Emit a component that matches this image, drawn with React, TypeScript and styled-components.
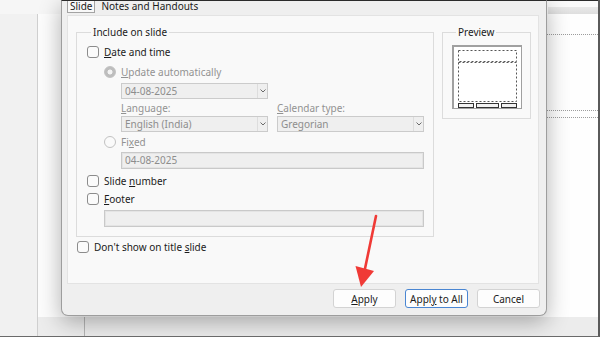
import React from "react";
import styled, { createGlobalStyle } from "styled-components";

const GlobalStyle = createGlobalStyle`
  html, body {
    margin: 0;
    padding: 0;
  }
  body {
    font-family: "Segoe UI", "Noto Sans", sans-serif;
    font-size: 10px;
    color: #1b1b1b;
  }
`;

const Page = styled.div`
  position: relative;
  width: 600px;
  height: 337px;
  overflow: hidden;
  box-sizing: border-box;
  display: flex;
  flex-direction: column;
  background: #f4f4f4;
  border-right: 2px solid #5a5a5a;
  border-bottom: 1px solid #6a6a6a;
`;

const TopBar = styled.div`
  height: 14px;
  display: flex;
  flex-shrink: 0;
`;

const TopLeft = styled.div`
  width: 61px;
  background: #f6f6f6;
`;

const TopRight = styled.div`
  flex: 1;
  display: flex;
  justify-content: flex-end;
  align-items: flex-end;
  border-top: 1px solid #2b2b2b;
  background: #fafafa;
`;

const Band = styled.div`
  width: 50px;
  height: 7px;
  background: linear-gradient(#e9e9e9, #dedede);
`;

const Body = styled.div`
  flex: 1;
  display: flex;
`;

const Sidebar = styled.div`
  width: 37px;
  background: #f1f1f1;
`;

const Workspace = styled.div`
  flex: 1;
  display: flex;
  flex-direction: column;
  border-left: 1px solid #cfcfcf;
  background: #fcfcfc;
`;

const WorkRow = styled.div`
  flex: 1;
  display: flex;
`;

const Gutter = styled.div`
  width: 23px;
`;

const Canvas = styled.div`
  flex: 1;
  display: flex;
  flex-direction: column;
  background: #fefefe;
`;

const Guide = styled.div<{ $gap: number }>`
  margin-top: ${(p) => p.$gap}px;
  border-top: 1px dotted #9c9c9c;
`;

const NotesBar = styled.div`
  height: 19px;
  display: flex;
  background: #ececec;
`;

const NotesDivider = styled.div`
  width: 46px;
  border-right: 1px solid #b5b5b5;
`;

const Dialog = styled.div`
  position: absolute;
  left: 61px;
  top: 0;
  width: 486px;
  height: 316px;
  box-sizing: border-box;
  display: flex;
  flex-direction: column;
  background: #efefef;
  border: 1px solid #9d9d9d;
  border-top: 1px solid #2b2b2b;
  border-radius: 0 0 7px 7px;
  box-shadow: 0 6px 22px rgba(0, 0, 0, 0.3);
`;

const TabStrip = styled.div`
  height: 14px;
  display: flex;
  align-items: flex-start;
  padding-left: 5px;
  gap: 3px;
  line-height: 11px;
`;

const Tab = styled.div<{ $active?: boolean }>`
  height: 12px;
  box-sizing: border-box;
  padding: 0 2px;
  border: 1px solid ${(p) => (p.$active ? "#a3a3a3" : "transparent")};
  border-top: none;
  background: ${(p) => (p.$active ? "#f8f8f8" : "transparent")};
  color: #1b1b1b;
`;

const Panel = styled.div`
  height: 269px;
  box-sizing: border-box;
  margin: 0 7px 0 5px;
  padding: 10px 7px 0 8px;
  background: #f9f9f9;
  border: 1px solid #e3e3e3;
`;

const Columns = styled.div`
  display: flex;
  align-items: flex-start;
  gap: 8px;
`;

const Group = styled.fieldset<{ $width: number }>`
  width: ${(p) => p.$width}px;
  box-sizing: border-box;
  min-width: 0;
  margin: 0;
  border: 1px solid #dcdcdc;
  display: flex;
  flex-direction: column;
`;

const MainGroup = styled(Group)`
  padding: 0 0 9px 10px;
`;

const PreviewGroup = styled(Group)`
  padding: 7px 0 9px 9px;
`;

const Legend = styled.legend`
  margin-left: 4px;
  padding: 0 2px;
  line-height: 12px;
  color: #1b1b1b;
`;

const Row = styled.div<{ $mt: number; $indent: number }>`
  display: flex;
  align-items: center;
  gap: 5px;
  height: 12px;
  line-height: 12px;
  margin-top: ${(p) => p.$mt}px;
  padding-left: ${(p) => p.$indent}px;
`;

const Text = styled.span<{ $disabled?: boolean }>`
  color: ${(p) => (p.$disabled ? "#929292" : "#1b1b1b")};
  white-space: nowrap;
`;

const Key = styled.u`
  text-decoration-thickness: 1px;
  text-underline-offset: 1px;
`;

const Checkbox = styled.span`
  width: 12px;
  height: 12px;
  box-sizing: border-box;
  flex-shrink: 0;
  border: 1px solid #8c8c8c;
  border-radius: 3px;
  background: #fbfbfb;
`;

const Radio = styled.span<{ $checked?: boolean }>`
  width: 12px;
  height: 12px;
  box-sizing: border-box;
  flex-shrink: 0;
  border-radius: 50%;
  border: 1px solid #c2c2c2;
  background: ${(p) =>
    p.$checked
      ? "radial-gradient(circle, #f3f3f3 0 2.2px, #bdbdbd 2.8px)"
      : "#fafafa"};
`;

const FieldRow = styled.div<{ $mt: number; $indent: number }>`
  display: flex;
  gap: 9px;
  margin-top: ${(p) => p.$mt}px;
  padding-left: ${(p) => p.$indent}px;
`;

const FieldLabel = styled.div`
  width: 147px;
  height: 12px;
  line-height: 12px;
  color: #929292;
`;

const Select = styled.div<{ $width: number }>`
  width: ${(p) => p.$width}px;
  height: 16px;
  box-sizing: border-box;
  display: flex;
  align-items: center;
  border: 1px solid #cbcbcb;
  background: #efefef;
  color: #8d8d8d;
  line-height: 14px;
`;

const SelectValue = styled.span`
  flex: 1;
  padding-left: 3px;
  white-space: nowrap;
`;

const DropButton = styled.span`
  width: 9px;
  height: 14px;
  display: flex;
  align-items: center;
  justify-content: center;
  border-left: 1px solid #dddddd;
`;

const TextBox = styled.div<{ $width: number }>`
  width: ${(p) => p.$width}px;
  height: 17px;
  box-sizing: border-box;
  border: 1px solid #c9c9c9;
  box-shadow: inset 0 0 0 1px #e4e4e4;
  background: #efefef;
  color: #8d8d8d;
  padding-left: 3px;
  line-height: 15px;
`;

const ButtonBar = styled.div`
  display: flex;
  justify-content: flex-end;
  gap: 9px;
  margin-top: 5px;
  padding-right: 6px;
`;

const Button = styled.button<{ $primary?: boolean }>`
  width: 63px;
  height: 19px;
  box-sizing: border-box;
  padding: 0;
  font-family: inherit;
  font-size: 10px;
  color: #1b1b1b;
  background: #fdfdfd;
  border: 1px solid ${(p) => (p.$primary ? "#4a86d2" : "#d3d3d3")};
  border-radius: 3px;
`;

const Annotation = styled.svg`
  position: absolute;
  left: 0;
  top: 0;
  pointer-events: none;
`;

function Chevron() {
  return (
    <svg width="6" height="4" viewBox="0 0 6 4">
      <polyline points="0.5,0.5 3,3 5.5,0.5" fill="none" stroke="#6a6a6a" strokeWidth="1" />
    </svg>
  );
}

function Dropdown({ value, width }: { value: string; width: number }) {
  return (
    <Select $width={width}>
      <SelectValue>{value}</SelectValue>
      <DropButton>
        <Chevron />
      </DropButton>
    </Select>
  );
}

function SlidePreview() {
  return (
    <svg width="70" height="64" viewBox="0 0 70 64">
      <rect x="0" y="0" width="70" height="64" fill="#a0a0a0" />
      <rect x="2" y="2" width="67" height="61" fill="#ffffff" />
      <rect x="6.5" y="5.5" width="58" height="11" fill="none" stroke="#555" strokeWidth="1" strokeDasharray="2 2" />
      <rect x="6.5" y="17.5" width="58" height="39" fill="none" stroke="#555" strokeWidth="1" strokeDasharray="2 2" />
      <rect x="6.5" y="58.5" width="15" height="4" fill="#f2f2f2" stroke="#333" strokeWidth="1" />
      <rect x="24.5" y="58.5" width="22" height="4" fill="#f2f2f2" stroke="#333" strokeWidth="1" />
      <rect x="49.5" y="58.5" width="15" height="4" fill="#f2f2f2" stroke="#333" strokeWidth="1" />
    </svg>
  );
}

export default function App() {
  return (
    <>
      <GlobalStyle />
      <Page>
        <TopBar>
          <TopLeft />
          <TopRight>
            <Band />
          </TopRight>
        </TopBar>
        <Body>
          <Sidebar />
          <Workspace>
            <WorkRow>
              <Gutter />
              <Canvas>
                <Guide $gap={20} />
                <Guide $gap={75} />
                <Guide $gap={6} />
              </Canvas>
            </WorkRow>
            <NotesBar>
              <NotesDivider />
            </NotesBar>
          </Workspace>
        </Body>

        <Dialog>
          <TabStrip>
            <Tab $active>Slide</Tab>
            <Tab>Notes and Handouts</Tab>
          </TabStrip>
          <Panel>
            <Columns>
              <MainGroup $width={358}>
                <Legend>Include on slide</Legend>
                <Row $mt={8} $indent={0}>
                  <Checkbox />
                  <Text>
                    <Key>D</Key>ate and time
                  </Text>
                </Row>
                <Row $mt={8} $indent={17}>
                  <Radio $checked />
                  <Text $disabled>
                    <Key>U</Key>pdate automatically
                  </Text>
                </Row>
                <FieldRow $mt={5} $indent={34}>
                  <Dropdown value="04-08-2025" width={147} />
                </FieldRow>
                <FieldRow $mt={3} $indent={34}>
                  <FieldLabel>
                    <Key>L</Key>anguage:
                  </FieldLabel>
                  <FieldLabel>
                    <Key>C</Key>alendar type:
                  </FieldLabel>
                </FieldRow>
                <FieldRow $mt={2} $indent={34}>
                  <Dropdown value="English (India)" width={147} />
                  <Dropdown value="Gregorian" width={147} />
                </FieldRow>
                <Row $mt={4} $indent={17}>
                  <Radio />
                  <Text $disabled>
                    Fi<Key>x</Key>ed
                  </Text>
                </Row>
                <FieldRow $mt={4} $indent={34}>
                  <TextBox $width={303}>04-08-2025</TextBox>
                </FieldRow>
                <Row $mt={6} $indent={0}>
                  <Checkbox />
                  <Text>
                    Slide <Key>n</Key>umber
                  </Text>
                </Row>
                <Row $mt={6} $indent={0}>
                  <Checkbox />
                  <Text>
                    <Key>F</Key>ooter
                  </Text>
                </Row>
                <FieldRow $mt={5} $indent={17}>
                  <TextBox $width={320} />
                </FieldRow>
              </MainGroup>
              <PreviewGroup $width={89}>
                <Legend>Preview</Legend>
                <SlidePreview />
              </PreviewGroup>
            </Columns>
            <Row $mt={4} $indent={1}>
              <Checkbox />
              <Text>
                Don't show on title <Key>s</Key>lide
              </Text>
            </Row>
          </Panel>
          <ButtonBar>
            <Button>
              <Key>A</Key>pply
            </Button>
            <Button $primary>
              Appl<Key>y</Key> to All
            </Button>
            <Button>Cancel</Button>
          </ButtonBar>
        </Dialog>

        <Annotation width="600" height="337" viewBox="0 0 600 337">
          <line x1="376" y1="216" x2="364.5" y2="271" stroke="#f03a36" strokeWidth="2.6" strokeLinecap="round" />
          <polygon points="355.5,266 374,271 361,287" fill="#f03a36" />
        </Annotation>
      </Page>
    </>
  );
}
